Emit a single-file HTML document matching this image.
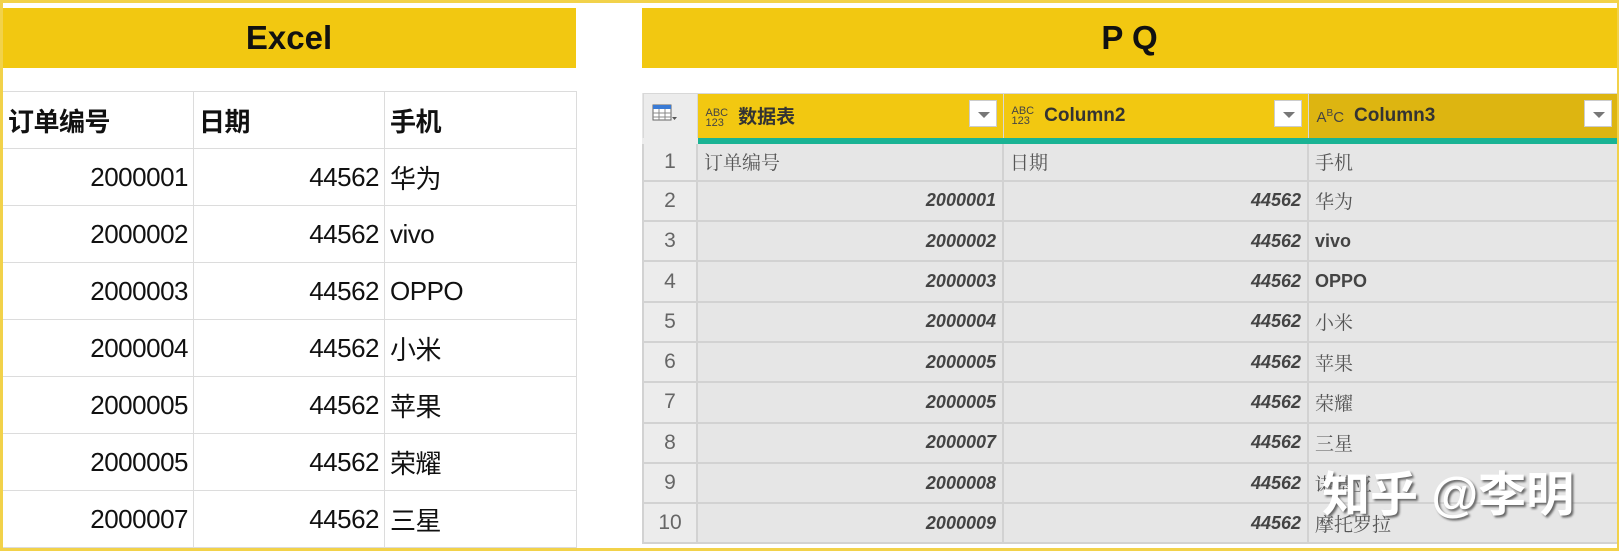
<!DOCTYPE html>
<html style="overflow:hidden;height:551px"><head><meta charset="utf-8"><style>
*{margin:0;padding:0;box-sizing:border-box}
body{width:1619px;height:551px;overflow:hidden;background:#fff;position:relative;font-family:"Liberation Sans","Noto Sans CJK SC",sans-serif}
.a{position:absolute}
.frame{left:0;top:0;width:1619px;height:551px;border:3px solid #f2d24a;border-right-width:2px;z-index:5}
.band{background:#f2c811;top:8px;height:60px;font-weight:bold;font-size:33px;color:#111;text-align:center;line-height:60px}
.ex{position:absolute;left:2px;top:91px;border-collapse:collapse;font-size:26px;color:#111;table-layout:fixed;width:574px}
.ex td{border:1px solid #dcdcdc;height:57px;padding:0 5px;letter-spacing:-0.5px;overflow:hidden;white-space:nowrap}
.ex td.n{text-align:right}
.pq{position:absolute;left:642px;top:93px;border-collapse:collapse;font-size:19px;color:#333;background:#e6e6e6;table-layout:fixed;width:975px}
.pq td{border:2px solid #d2d2d2;height:40.3px;padding:0 6px;white-space:nowrap;overflow:hidden}
.pq td.i{text-align:center;color:#666;background:#ececec;font-size:21px}
.pq td.n{text-align:right;font-style:italic;font-weight:bold;color:#444;font-size:18px}
.pq td.c{font-family:"Noto Serif CJK SC",serif;color:#555}
.pq td.b{font-weight:bold;color:#444;font-size:18px}
.pq th{height:47px;background:#f2c811;border:1px solid #d8d8d8;text-align:left;font-size:19px;position:relative;padding-left:8px;border-bottom:6px solid #1ab394;white-space:nowrap}
.dd{position:absolute;right:6px;top:6px;width:28px;height:27px;background:#fff;border:1px solid #ccc}
.dd:after{content:"";position:absolute;left:8px;top:11px;border:6px solid transparent;border-top:6px solid #777}
.tp{font-size:11px;line-height:10px;display:inline-block;vertical-align:middle;color:#444;font-weight:normal;margin-right:10px}
</style></head><body>
<div class="a frame"></div>
<div class="a band" style="left:2px;width:574px">Excel</div>
<div class="a band" style="left:642px;width:975px">P Q</div>
<table class="ex">
<colgroup><col style="width:191px"><col style="width:191px"><col style="width:192px"></colgroup>
<tr><td style="font-weight:bold">订单编号</td><td style="font-weight:bold">日期</td><td style="font-weight:bold">手机</td></tr>
<tr><td class="n">2000001</td><td class="n">44562</td><td>华为</td></tr>
<tr><td class="n">2000002</td><td class="n">44562</td><td>vivo</td></tr>
<tr><td class="n">2000003</td><td class="n">44562</td><td>OPPO</td></tr>
<tr><td class="n">2000004</td><td class="n">44562</td><td>小米</td></tr>
<tr><td class="n">2000005</td><td class="n">44562</td><td>苹果</td></tr>
<tr><td class="n">2000005</td><td class="n">44562</td><td>荣耀</td></tr>
<tr><td class="n">2000007</td><td class="n">44562</td><td>三星</td></tr>
</table>
<table class="pq">
<colgroup><col style="width:54px"><col style="width:306px"><col style="width:305px"><col style="width:310px"></colgroup>
<tr><th style="background:#ececec;padding-left:8px;border-bottom:6px solid #ececec"><svg width="26" height="20"><rect x="1" y="2" width="18" height="15" fill="#fff" stroke="#666"/><rect x="1" y="2" width="18" height="4" fill="#3a7bd5"/><path d="M1 10H19M1 14H19M7 6V17M13 6V17" stroke="#888"/><path d="M20 14h5l-2.5 3z" fill="#555"/></svg></th>
<th><span class="tp">ABC<br>123</span>数据表<span class="dd"></span></th>
<th><span class="tp">ABC<br>123</span>Column2<span class="dd"></span></th>
<th style="background:#ddb511;border-bottom:6px solid #1ab394"><span class="tp" style="font-size:15px">A<sup style="font-size:10px">B</sup>C</span>Column3<span class="dd"></span></th></tr>
<tr><td class="i">1</td><td class="c">订单编号</td><td class="c">日期</td><td class="c">手机</td></tr>
<tr><td class="i">2</td><td class="n">2000001</td><td class="n">44562</td><td class="c">华为</td></tr>
<tr><td class="i">3</td><td class="n">2000002</td><td class="n">44562</td><td class="b">vivo</td></tr>
<tr><td class="i">4</td><td class="n">2000003</td><td class="n">44562</td><td class="b">OPPO</td></tr>
<tr><td class="i">5</td><td class="n">2000004</td><td class="n">44562</td><td class="c">小米</td></tr>
<tr><td class="i">6</td><td class="n">2000005</td><td class="n">44562</td><td class="c">苹果</td></tr>
<tr><td class="i">7</td><td class="n">2000005</td><td class="n">44562</td><td class="c">荣耀</td></tr>
<tr><td class="i">8</td><td class="n">2000007</td><td class="n">44562</td><td class="c">三星</td></tr>
<tr><td class="i">9</td><td class="n">2000008</td><td class="n">44562</td><td class="c">诺基亚</td></tr>
<tr><td class="i">10</td><td class="n">2000009</td><td class="n">44562</td><td class="c">摩托罗拉</td></tr>
</table>
<div class="a" style="left:1322px;top:455px;font-size:48px;color:#fff;text-shadow:2px 2px 2px #666;font-weight:bold">知乎 @李明</div>
<div class="a" style="left:0;top:548px;width:1619px;height:3px;background:#f2d24a;z-index:6"></div>
</body></html>
